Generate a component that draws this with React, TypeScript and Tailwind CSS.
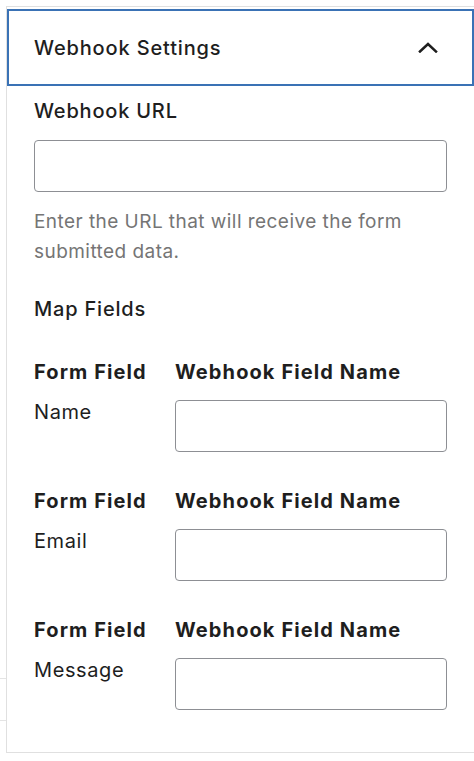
import React, { useState } from "react";

type MapRow = { label: string; value: string };

const ChevronUp = () => (
  <svg width="20" height="11" viewBox="0 0 20 11" fill="none" className="shrink-0">
    <polyline points="2,9.5 10,2 18,9.5" stroke="#1e1e1e" strokeWidth="2.5" strokeLinecap="square" />
  </svg>
);

const TextInput = ({ value, onChange, className = "" }: { value: string; onChange: (v: string) => void; className?: string }) => (
  <input
    value={value}
    onChange={(e) => onChange(e.target.value)}
    className={`h-[52px] w-full rounded-[4px] border-[1.5px] border-[#8d8f94] bg-white px-3 text-[19px] text-[#1e1e1e] outline-none ${className}`}
  />
);

export default function App() {
  const [open, setOpen] = useState(true);
  const [url, setUrl] = useState("");
  const [rows, setRows] = useState<MapRow[]>([
    { label: "Name", value: "" },
    { label: "Email", value: "" },
    { label: "Message", value: "" },
  ]);

  const updateRow = (index: number, value: string) => {
    setRows(rows.map((r, i) => (i === index ? { ...r, value } : r)));
  };

  return (
    <div className="flex h-[761px] w-[474px] bg-white pt-[6px] font-['Inter','Liberation_Sans',sans-serif] text-[#1e1e1e]">
      {/* edge of the editor canvas behind the sidebar */}
      <div className="flex w-[6px] flex-col">
        <div className="mt-[672px] h-px bg-[#e4e4e4]" />
        <div className="mt-[41px] h-px bg-[#e4e4e4]" />
      </div>

      <div className="h-[747px] flex-1 border-b border-l border-t border-[#e0e0e0]">
        <button
          onClick={() => setOpen(!open)}
          className="mt-[2px] flex h-[77px] w-full items-center justify-between border-2 border-[#3a72b5] pl-[25px] pr-[34px] text-left"
        >
          <span className="text-[20px] font-medium leading-[30px] tracking-[0.85px]">Webhook Settings</span>
          <ChevronUp />
        </button>

        {open && (
          <div className="px-[27px]">
            <div className="mt-[10px] text-[20px] font-medium leading-[30px] tracking-[0.8px]">Webhook URL</div>
            <TextInput value={url} onChange={setUrl} className="mt-[14px]" />
            <p className="mt-[15px] text-[19px] leading-[30px] tracking-[0.45px] text-[#757575]">
              Enter the URL that will receive the form submitted data.
            </p>

            <div className="mt-[27px] text-[20px] font-medium leading-[30px] tracking-[0.8px]">Map Fields</div>

            {rows.map((row, index) => (
              <div key={row.label} className={`grid grid-cols-[141px_1fr] ${index === 0 ? "mt-[33px]" : "mt-[34px]"}`}>
                <div className="text-[20px] font-bold leading-[30px] tracking-[1.1px]">Form Field</div>
                <div className="text-[20px] font-bold leading-[30px] tracking-[1.1px]">Webhook Field Name</div>
                <div className="mt-[10px] text-[20px] leading-[30px] tracking-[0.6px]">{row.label}</div>
                <div className="mt-[13px]">
                  <TextInput value={row.value} onChange={(v) => updateRow(index, v)} />
                </div>
              </div>
            ))}
          </div>
        )}
      </div>
    </div>
  );
}
